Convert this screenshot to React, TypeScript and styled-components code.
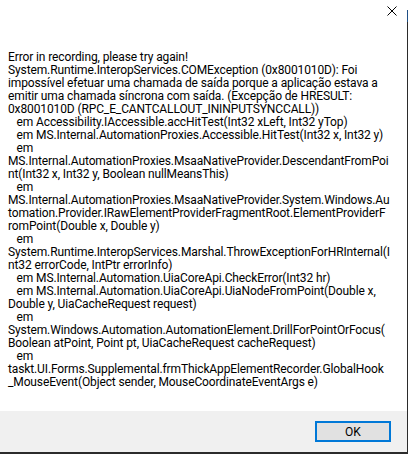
import React from "react";
import styled, { createGlobalStyle } from "styled-components";

const GlobalStyle = createGlobalStyle`
  html, body {
    margin: 0;
    padding: 0;
    background: #ffffff;
  }
  * {
    box-sizing: border-box;
  }
`;

// the window edge on the right: white at the very top, a bit of blue, then dark
const Window = styled.div`
  width: 408px;
  height: 454px;
  display: flex;
  flex-direction: column;
  padding-right: 1px;
  background:
    linear-gradient(
        to bottom,
        #ffffff 0 10px,
        #1f4f86 10px 22px,
        #2b2b2b 22px 100%
      )
      right top / 1px 100% no-repeat,
    #ffffff;
  border-bottom: 2px solid #2b2b2b;
  font-family: Roboto, "Noto Sans", sans-serif;
  color: #000;
`;

const TitleBar = styled.div`
  height: 30px;
  display: flex;
  justify-content: flex-end;
  align-items: flex-start;
`;

const CloseButton = styled.button`
  width: 30px;
  height: 22px;
  padding: 0;
  border: none;
  background: transparent;
  display: flex;
  align-items: center;
  justify-content: center;
  cursor: default;
`;

const Body = styled.div`
  flex: 1;
  padding: 21px 8px 0 8px;
  overflow: hidden;
`;

const Message = styled.div`
  font-size: 12px;
  line-height: 13px;
  white-space: pre;
  letter-spacing: -0.12px;
`;

const Footer = styled.div`
  height: 41px;
  background: #f0f0f0;
  display: flex;
  justify-content: flex-end;
  align-items: flex-start;
  padding: 10px 16px 0 0;
`;

const OkButton = styled.button`
  width: 76px;
  height: 21px;
  padding: 0;
  border: 2px solid #0078d7;
  background: #e1e1e1;
  font-family: Roboto, "Noto Sans", sans-serif;
  font-size: 12px;
  color: #000;
  display: flex;
  align-items: center;
  justify-content: center;
`;

const lines = [
  "Error in recording, please try again!",
  "System.Runtime.InteropServices.COMException (0x8001010D): Foi",
  "impossível efetuar uma chamada de saída porque a aplicação estava a",
  "emitir uma chamada síncrona com saída. (Excepção de HRESULT:",
  "0x8001010D (RPC_E_CANTCALLOUT_ININPUTSYNCCALL))",
  "   em Accessibility.IAccessible.accHitTest(Int32 xLeft, Int32 yTop)",
  "   em MS.Internal.AutomationProxies.Accessible.HitTest(Int32 x, Int32 y)",
  "   em",
  "MS.Internal.AutomationProxies.MsaaNativeProvider.DescendantFromPoi",
  "nt(Int32 x, Int32 y, Boolean nullMeansThis)",
  "   em",
  "MS.Internal.AutomationProxies.MsaaNativeProvider.System.Windows.Au",
  "tomation.Provider.IRawElementProviderFragmentRoot.ElementProviderF",
  "romPoint(Double x, Double y)",
  "   em",
  "System.Runtime.InteropServices.Marshal.ThrowExceptionForHRInternal(I",
  "nt32 errorCode, IntPtr errorInfo)",
  "   em MS.Internal.Automation.UiaCoreApi.CheckError(Int32 hr)",
  "   em MS.Internal.Automation.UiaCoreApi.UiaNodeFromPoint(Double x,",
  "Double y, UiaCacheRequest request)",
  "   em",
  "System.Windows.Automation.AutomationElement.DrillForPointOrFocus(",
  "Boolean atPoint, Point pt, UiaCacheRequest cacheRequest)",
  "   em",
  "taskt.UI.Forms.Supplemental.frmThickAppElementRecorder.GlobalHook",
  "_MouseEvent(Object sender, MouseCoordinateEventArgs e)",
];

const CloseIcon = () => (
  <svg width="10" height="10" viewBox="0 0 10 10">
    <path d="M0.5 0.5 L9.5 9.5 M9.5 0.5 L0.5 9.5" stroke="#000" strokeWidth="1" fill="none" />
  </svg>
);

export default function App() {
  return (
    <>
      <GlobalStyle />
      <Window>
        <TitleBar>
          <CloseButton aria-label="Fechar">
            <CloseIcon />
          </CloseButton>
        </TitleBar>
        <Body>
          <Message>{lines.join("\n")}</Message>
        </Body>
        <Footer>
          <OkButton>OK</OkButton>
        </Footer>
      </Window>
    </>
  );
}
